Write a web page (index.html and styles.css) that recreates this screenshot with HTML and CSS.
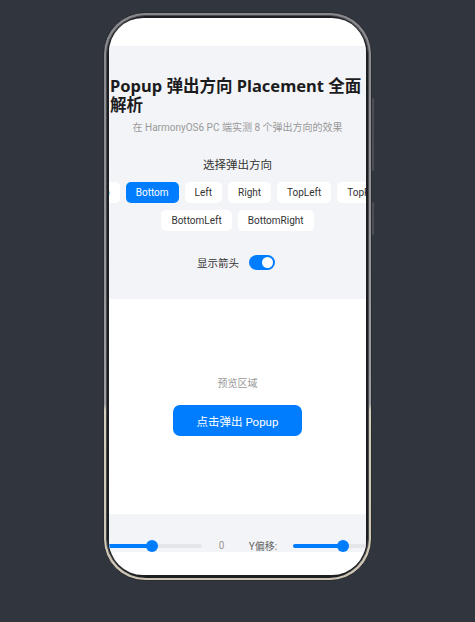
FILE: index.html
```html
<!DOCTYPE html>
<html lang="zh-CN">
<head>
  <meta charset="UTF-8" />
  <title>Popup Placement</title>
  <meta name="viewport" content="width=device-width, initial-scale=1.0" />
  <link rel="stylesheet" href="styles.css">
</head>
<body>
  <div class="phone">
    <span class="side-key key-a"></span>
    <span class="side-key key-b"></span>
    <div class="bezel">
      <div class="screen">
        <div class="status-bar"></div>

        <div class="header">
          <h1 class="title">Popup 弹出方向 Placement 全面<br>解析</h1>
          <p class="subtitle">在 HarmonyOS6 PC 端实测 8 个弹出方向的效果</p>

          <p class="section-label">选择弹出方向</p>
          <div class="chip-row first">
            <button class="chip">Top</button>
            <button class="chip active">Bottom</button>
            <button class="chip">Left</button>
            <button class="chip">Right</button>
            <button class="chip">TopLeft</button>
            <button class="chip">TopRight</button>
          </div>
          <div class="chip-row">
            <button class="chip">BottomLeft</button>
            <button class="chip">BottomRight</button>
          </div>

          <div class="toggle-row">
            <span>显示箭头</span>
            <span class="toggle on"><span class="knob"></span></span>
          </div>
        </div>

        <div class="preview">
          <p class="preview-label">预览区域</p>
          <button class="popup-btn">点击弹出 Popup</button>
        </div>

        <div class="controls">
          <div class="slider-row">
            <span class="ctl-label">X偏移:</span>
            <div class="slider"><div class="fill" style="width: 50%"></div><span class="thumb" style="left: 50%"></span></div>
            <span class="ctl-value">0</span>
            <span class="ctl-label">Y偏移:</span>
            <div class="slider"><div class="fill" style="width: 50%"></div><span class="thumb" style="left: 50%"></span></div>
            <span class="ctl-value">0</span>
          </div>
        </div>
      </div>
    </div>
  </div>
</body>
</html>
```

FILE: styles.css
```css
:root {
  --page-bg: #31353d;
  --panel-bg: #f3f4f7;
  --blue: #007dff;
  --text: #1c1c1e;
  --text-2: #333;
  --muted: #999;
}

body {
  margin: 0;
  height: 622px;
  background-color: var(--page-bg);
  font-family: Roboto, "Noto Sans CJK SC", sans-serif;
  display: flex;
  justify-content: center;
  align-items: flex-start;
  padding-top: 12px;
  box-sizing: border-box;
}

.phone {
  position: relative;
  width: 269px;
  height: 569px;
  box-sizing: border-box;
  border: 1px solid #2a2c30;
  border-radius: 42px;
  padding: 2px;
  background: linear-gradient(to bottom, #87888c 0%, #9d9ea2 69%, #d4cebd 70%, #cbc4b2 100%);
}

.side-key {
  position: absolute;
  right: -3px;
  width: 2px;
  background-color: #4c4e53;
  border-radius: 1px;
}

.key-a {
  top: 85px;
  height: 73px;
}

.key-b {
  top: 189px;
  height: 33px;
}

.bezel {
  height: 100%;
  box-sizing: border-box;
  border-radius: 40px;
  background-color: #1d1e21;
  border-top: 1px solid #4a4b4f;
  border-left: 1px solid #4a4b4f;
  border-right: 1px solid #4a4b4f;
  padding: 2px 2px 3px;
}

.screen {
  height: 100%;
  border-radius: 34px;
  overflow: hidden;
  background-color: #fff;
  display: flex;
  flex-direction: column;
}

.status-bar {
  height: 28px;
  flex-shrink: 0;
}

.header {
  background-color: var(--panel-bg);
  padding: 30px 0 29px;
  display: flex;
  flex-direction: column;
  align-items: center;
}

.title {
  align-self: stretch;
  margin: 0;
  padding: 0 1px;
  font-family: "Noto Sans", "Noto Sans CJK SC", sans-serif;
  font-size: 16.5px;
  line-height: 19px;
  font-weight: 700;
  color: var(--text);
  white-space: nowrap;
}

.subtitle {
  margin: 7px 0 0;
  font-size: 10px;
  line-height: 14px;
  color: var(--muted);
  white-space: nowrap;
}

.section-label {
  margin: 22px 0 0;
  font-size: 11.5px;
  line-height: 16px;
  color: var(--text-2);
}

.chip-row {
  display: flex;
  justify-content: center;
  gap: 6px;
  margin-top: 9px;
  width: 100%;
  box-sizing: border-box;
}

.chip-row.first {
  padding-left: 5px;
}

.chip-row + .chip-row {
  margin-top: 7px;
}

.chip {
  flex-shrink: 0;
  height: 21px;
  padding: 0 10px;
  border: none;
  border-radius: 5px;
  background-color: #fff;
  color: var(--text-2);
  font-family: inherit;
  font-size: 10px;
  line-height: 21px;
}

.chip.active {
  background-color: var(--blue);
  color: #fff;
}

.toggle-row {
  margin-top: 24px;
  display: flex;
  align-items: center;
  gap: 10px;
  padding-right: 3px;
  font-size: 10.5px;
  color: var(--text-2);
}

.toggle {
  width: 26px;
  height: 15px;
  border-radius: 8px;
  background-color: #ccc;
  display: flex;
  align-items: center;
  padding: 0 2px;
  box-sizing: border-box;
}

.toggle.on {
  background-color: var(--blue);
  justify-content: flex-end;
}

.knob {
  width: 11px;
  height: 11px;
  border-radius: 50%;
  background-color: #fff;
}

.preview {
  height: 215px;
  flex-shrink: 0;
  display: flex;
  flex-direction: column;
  align-items: center;
  justify-content: center;
}

.preview-label {
  margin: 0;
  font-size: 10px;
  line-height: 14px;
  color: var(--muted);
}

.popup-btn {
  margin-top: 14px;
  width: 129px;
  height: 31px;
  border: none;
  border-radius: 7px;
  background-color: var(--blue);
  color: #fff;
  font-family: inherit;
  font-size: 11.5px;
}

.controls {
  background-color: var(--panel-bg);
  height: 38px;
  flex-shrink: 0;
  display: flex;
  align-items: flex-end;
  box-sizing: border-box;
}

.slider-row {
  width: 100%;
  height: 13px;
  display: flex;
  justify-content: center;
  align-items: center;
  padding-left: 22px;
  box-sizing: border-box;
}

.ctl-label {
  flex-shrink: 0;
  font-size: 10px;
  color: #666;
  margin-right: 16px;
}

.ctl-value {
  flex-shrink: 0;
  width: 30px;
  margin: 0 12px 0 5px;
  text-align: center;
  font-size: 10px;
  color: var(--muted);
}

.slider {
  position: relative;
  flex-shrink: 0;
  width: 100px;
  height: 4px;
  border-radius: 2px;
  background-color: #e4e5e8;
}

.fill {
  height: 100%;
  border-radius: 2px;
  background-color: var(--blue);
}

.thumb {
  position: absolute;
  top: 50%;
  width: 12px;
  height: 12px;
  margin: -6px 0 0 -6px;
  border-radius: 50%;
  background-color: var(--blue);
}
```
